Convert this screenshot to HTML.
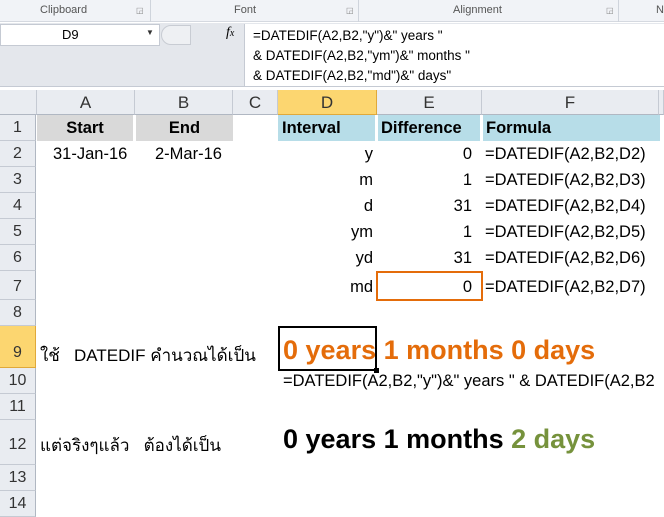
<!DOCTYPE html><html><head><style>
*{margin:0;padding:0;box-sizing:border-box}
body{width:664px;height:497px;overflow:hidden;background:#fff;font-family:"Liberation Sans","Noto Sans CJK SC",sans-serif;position:relative}
.a{position:absolute;white-space:nowrap}
.c{font-size:16.5px;color:#000;line-height:26px}
.rh{position:absolute;left:0;width:36px;background:#e9ecf1;border-bottom:1px solid #c5cad3;border-right:1px solid #b0b7c2;text-align:center;font-size:16px;color:#333}
.ch{position:absolute;top:90px;height:25px;background:#e9ecf1;border-right:1px solid #c5cad3;border-bottom:1px solid #b0b7c2;text-align:center;font-size:17px;line-height:25px;color:#333}
.b{font-weight:bold}
</style></head><body>
<div class="a" style="left:0;top:0;width:664px;height:22px;background:#f1f3f7;border-bottom:1px solid #d5d9e0"></div>
<div class="a" style="left:40px;top:4px;font-size:11px;color:#555">Clipboard</div>
<div class="a" style="left:136px;top:6px;font-size:8px;color:#888">◲</div>
<div class="a" style="left:150px;top:0;width:1px;height:22px;background:#cfd4dc"></div>
<div class="a" style="left:234px;top:4px;font-size:11px;color:#555">Font</div>
<div class="a" style="left:346px;top:6px;font-size:8px;color:#888">◲</div>
<div class="a" style="left:358px;top:0;width:1px;height:22px;background:#cfd4dc"></div>
<div class="a" style="left:453px;top:4px;font-size:11px;color:#555">Alignment</div>
<div class="a" style="left:606px;top:6px;font-size:8px;color:#888">◲</div>
<div class="a" style="left:618px;top:0;width:1px;height:22px;background:#cfd4dc"></div>
<div class="a" style="left:656px;top:4px;font-size:11px;color:#555">N</div>
<div class="a" style="left:0;top:23px;width:664px;height:64px;background:#e4e7ec;border-bottom:1px solid #c5cad3"></div>
<div class="a" style="left:0;top:24px;width:160px;height:22px;background:#fff;border:1px solid #c5cad3"></div>
<div class="a" style="left:62px;top:27px;font-size:13px">D9</div>
<div class="a" style="left:146px;top:28px;font-size:8px;color:#333">▼</div>
<div class="a" style="left:161px;top:25px;width:30px;height:20px;border-radius:10px 0 0 10px;background:#eef0f3;border:1px solid #c8ccd3"></div>
<div class="a" style="left:226px;top:25px;font-size:14px;font-style:italic;font-family:'Liberation Serif',serif">f<span style="font-size:10px">x</span></div>
<div class="a" style="left:244px;top:24px;width:420px;height:62px;background:#fff;border-left:1px solid #c5cad3"></div>
<div class="a" style="left:253px;top:26px;font-size:13.5px;line-height:20px">=DATEDIF(A2,B2,"y")&amp;" years "<br>&amp; DATEDIF(A2,B2,"ym")&amp;" months "<br>&amp; DATEDIF(A2,B2,"md")&amp;" days"</div>
<div class="ch" style="left:0;width:37px"></div>
<div class="ch" style="left:37px;width:98px">A</div>
<div class="ch" style="left:135px;width:98px">B</div>
<div class="ch" style="left:233px;width:45px">C</div>
<div class="ch" style="left:278px;width:99px;background:#fcd670;border-color:#e0a93a">D</div>
<div class="ch" style="left:377px;width:105px">E</div>
<div class="ch" style="left:482px;width:177px">F</div>
<div class="ch" style="left:659px;width:5px"></div>
<div class="rh" style="top:115px;height:26px;line-height:26px">1</div>
<div class="rh" style="top:141px;height:26px;line-height:26px">2</div>
<div class="rh" style="top:167px;height:26px;line-height:26px">3</div>
<div class="rh" style="top:193px;height:26px;line-height:26px">4</div>
<div class="rh" style="top:219px;height:26px;line-height:26px">5</div>
<div class="rh" style="top:245px;height:26px;line-height:26px">6</div>
<div class="rh" style="top:271px;height:29px;line-height:31px">7</div>
<div class="rh" style="top:300px;height:26px;line-height:26px">8</div>
<div class="rh" style="top:326px;height:42px;line-height:54px;background:#fcd670;border-color:#e0a93a">9</div>
<div class="rh" style="top:368px;height:26px;line-height:26px">10</div>
<div class="rh" style="top:394px;height:26px;line-height:26px">11</div>
<div class="rh" style="top:420px;height:45px;line-height:50px">12</div>
<div class="rh" style="top:465px;height:26px;line-height:26px">13</div>
<div class="rh" style="top:491px;height:26px;line-height:26px">14</div>
<div class="a c b" style="left:37px;top:115px;width:96px;height:26px;background:#d9d9d9;text-align:center">Start</div>
<div class="a c b" style="left:136px;top:115px;width:97px;height:26px;background:#d9d9d9;text-align:center">End</div>
<div class="a c b" style="left:278px;top:115px;width:97px;height:26px;background:#b7dde8;padding-left:4px">Interval</div>
<div class="a c b" style="left:378px;top:115px;width:102px;height:26px;background:#b7dde8;padding-left:3px">Difference</div>
<div class="a c b" style="left:483px;top:115px;width:177px;height:26px;background:#b7dde8;padding-left:3px">Formula</div>
<div class="a c" style="left:53px;top:141px">31-Jan-16</div>
<div class="a c" style="left:155px;top:141px">2-Mar-16</div>
<div class="a c" style="left:278px;top:141px;width:95px;text-align:right;line-height:26px">y<br>m<br>d<br>ym<br>yd<br><span style="line-height:32px">md</span></div>
<div class="a c" style="left:378px;top:141px;width:94px;text-align:right">0<br>1<br>31<br>1<br>31<br><span style="line-height:32px">0</span></div>
<div class="a c" style="left:485px;top:141px">=DATEDIF(A2,B2,D2)<br>=DATEDIF(A2,B2,D3)<br>=DATEDIF(A2,B2,D4)<br>=DATEDIF(A2,B2,D5)<br>=DATEDIF(A2,B2,D6)<br><span style="line-height:32px">=DATEDIF(A2,B2,D7)</span></div>
<div class="a" style="left:376px;top:271px;width:107px;height:30px;border:2px solid #e46c0a"></div>
<div class="a" style="left:40px;top:342px;font-size:17px">ใช้&nbsp;&nbsp; DATEDIF คำนวณได้เป็น</div>
<div class="a b" style="left:283px;top:335px;font-size:27px;color:#e46c0a">0 years 1 months 0 days</div>
<div class="a" style="left:278px;top:326px;width:99px;height:45px;border:2px solid #000"></div>
<div class="a" style="left:374px;top:368px;width:5px;height:5px;background:#000"></div>
<div class="a c" style="left:283px;top:368px">=DATEDIF(A2,B2,"y")&amp;" years " &amp; DATEDIF(A2,B2</div>
<div class="a" style="left:40px;top:432px;font-size:17px">แต่จริงๆแล้ว&nbsp;&nbsp; ต้องได้เป็น</div>
<div class="a b" style="left:283px;top:424px;font-size:27px;color:#000">0 years 1 months <span style="color:#76923c">2 days</span></div>
</body></html>
